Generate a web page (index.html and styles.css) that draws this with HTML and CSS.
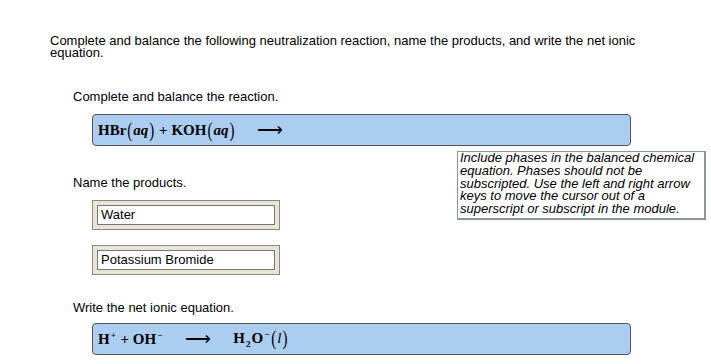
FILE: index.html
```html
<!DOCTYPE html>
<html lang="en">
<head>
    <meta charset="UTF-8">
    <title>Neutralization reaction</title>
    <link rel="stylesheet" href="styles.css">
</head>
<body>
<div class="page">
    <p class="intro">Complete and balance the following neutralization reaction, name the products, and write the net ionic equation.</p>

    <div class="part part_first">
        <p class="label">Complete and balance the reaction.</p>
        <div class="answer">
            <span class="eq">HBr<span class="paren">(</span><i>aq</i><span class="paren">)</span> + KOH<span class="paren">(</span><i>aq</i><span class="paren">)</span></span>
            <span class="arrow">&#10230;</span>
        </div>
    </div>

    <div class="hint">Include phases in the balanced chemical equation. Phases should not be subscripted. Use the left and right arrow keys to move the cursor out of a superscript or subscript in the module.</div>

    <div class="part part_names">
        <p class="label">Name the products.</p>
        <div class="field"><div class="field_inner">Water</div></div>
        <div class="field"><div class="field_inner">Potassium Bromide</div></div>
    </div>

    <div class="part part_last">
        <p class="label">Write the net ionic equation.</p>
        <div class="answer">
            <span class="eq">H<sup>+</sup> + OH<sup>&minus;</sup></span>
            <span class="arrow">&#10230;</span>
            <span class="eq">H<sub>2</sub>O<sup>&minus;</sup><span class="paren">(</span><i class="thin">l</i><span class="paren">)</span></span>
        </div>
    </div>
</div>
</body>
</html>
```

FILE: styles.css
```css
body {
    margin: 0;
    background: #fff;
    font-family: "Liberation Sans", Arial, sans-serif;
    font-size: 13px;
    color: #000;
}

.page {
    position: relative;
    padding: 35px 0 0 50px;
    width: 600px;
}

p {
    margin: 0;
}

.intro {
    line-height: 12px;
    width: 595px;
}

.part {
    margin-left: 23px;
}

.part_first {
    margin-top: 31px;
}

.part_names {
    margin-top: 30px;
}

.part_last {
    margin-top: 26px;
}

.label {
    line-height: 14px;
}

.answer {
    display: flex;
    align-items: center;
    gap: 16px;
    margin: 10px 0 0 19px;
    width: 532px;
    height: 30px;
    padding: 0 0 0 5px;
    background: #abcdef;
    border: 1px solid #555;
    border-radius: 4px;
    font-family: "Liberation Serif", "Times New Roman", serif;
    font-weight: bold;
    font-size: 15px;
}

.part_last .answer {
    margin-top: 8px;
}

.eq i {
    font-weight: bold;
}

.eq .thin {
    font-weight: normal;
}

.paren {
    display: inline-block;
    font-weight: normal;
    transform: scaleY(1.35);
    margin: 0 1px;
}

.eq sup,
.eq sub {
    font-size: 9px;
    margin: 0 1px;
}

.arrow {
    font-weight: normal;
    font-size: 18px;
    margin: 0 6px;
}

.field {
    margin: 10px 0 0 19px;
    width: 178px;
    border: 1px solid #8a8a7a;
    background: #e9e5d4;
    padding: 4px;
}

.field + .field {
    margin-top: 15px;
}

.field_inner {
    background: #fff;
    border: 1px solid #777;
    height: 18px;
    line-height: 18px;
    padding-left: 3px;
}

.hint {
    position: absolute;
    left: 457px;
    top: 151px;
    width: 242px;
    height: 66px;
    padding: 0 2px;
    border: 1px solid #8c9898;
    border-right-width: 2px;
    border-bottom-width: 2px;
    font-style: italic;
    line-height: 12.75px;
}
```
